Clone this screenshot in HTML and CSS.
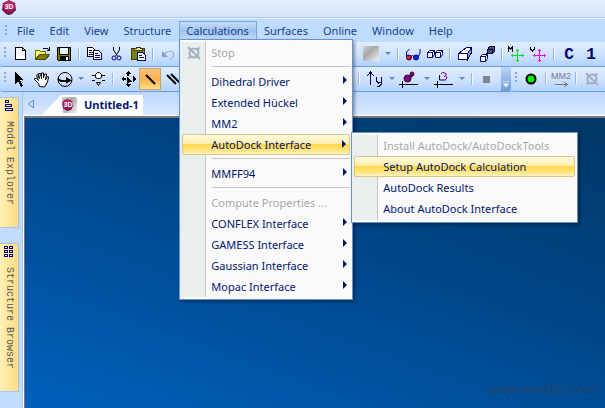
FILE: index.html
```html
<!DOCTYPE html>
<html lang="en">
<head>
<meta charset="utf-8">
<title>Untitled-1</title>
<link rel="stylesheet" href="styles.css">
</head>
<body>
<svg class="defs" width="0" height="0" aria-hidden="true">
  <defs>
    <linearGradient id="metal" x1="0" y1="0" x2="1" y2="1">
      <stop offset="0" stop-color="#d4d4d4"/><stop offset=".4" stop-color="#a8a8a8"/><stop offset="1" stop-color="#f4f4f4"/>
    </linearGradient>
    <radialGradient id="ruby" cx=".5" cy=".35" r=".65">
      <stop offset="0" stop-color="#d8327c"/><stop offset=".6" stop-color="#a01858"/><stop offset="1" stop-color="#5c1038"/>
    </radialGradient>
    <symbol id="stop" viewBox="0 0 22 22">
      <circle cx="12" cy="11" r="4.500" fill="none" stroke="#a3aebe" stroke-width="2"/>
      <path d="M6 5l12 12M15.500 7.500l2-2M6.500 16.500l2-2" stroke="#a3aebe" stroke-width="2" fill="none"/>
    </symbol>
    <symbol id="cube" viewBox="0 0 8 8">
      <path d="M.5 2.500l2-2h5v4l-2 3h-5zM.5 2.500h5v5M5.500 2.500l2-2" fill="#fff" stroke="#000070"/>
    </symbol>
  </defs>
</svg>

<header class="titlebar">
  <svg class="logo" viewBox="0 0 16 16" aria-hidden="true"><path d="M8 0l6 3 1 7-4 4-3 1-3-1-4-4 1-7z" fill="url(#ruby)"/><text x="8" y="9">3D</text></svg>
</header>

<nav class="menubar">
  <span class="grip"></span>
  <button>File</button>
  <button>Edit</button>
  <button>View</button>
  <button>Structure</button>
  <div class="menu-root">
    <button class="open">Calculations</button>
    <div class="menu main-menu" role="menu">
      <button class="item disabled" role="menuitem" disabled><svg class="item-icon smooth" viewBox="0 0 22 22"><use href="#stop"/></svg>Stop</button>
      <hr>
      <button class="item more" role="menuitem">Dihedral Driver</button>
      <button class="item more" role="menuitem">Extended Hückel</button>
      <button class="item more" role="menuitem">MM2</button>
      <div class="submenu-root">
        <button class="item more hot" role="menuitem">AutoDock Interface</button>
        <div class="menu submenu" role="menu">
          <button class="item disabled" role="menuitem" disabled>Install AutoDock/AutoDockTools</button>
          <button class="item hot" role="menuitem">Setup AutoDock Calculation</button>
          <button class="item" role="menuitem">AutoDock Results</button>
          <button class="item" role="menuitem">About AutoDock Interface</button>
        </div>
      </div>
      <hr>
      <button class="item more" role="menuitem">MMFF94</button>
      <hr>
      <button class="item disabled" role="menuitem" disabled>Compute Properties ...</button>
      <button class="item more" role="menuitem">CONFLEX Interface</button>
      <button class="item more" role="menuitem">GAMESS Interface</button>
      <button class="item more" role="menuitem">Gaussian Interface</button>
      <button class="item more" role="menuitem">Mopac Interface</button>
    </div>
  </div>
  <button>Surfaces</button>
  <button>Online</button>
  <button>Window</button>
  <button>Help</button>
</nav>

<div class="toolbar">
  <span class="grip"></span>
  <div class="group leading">
    <button class="tool" aria-label="New"><svg viewBox="0 0 22 22"><path d="M6.500 4.500h7l3 3v9h-10zM13.500 4.500v3h3" fill="#fff" stroke="#000"/></svg></button>
    <button class="tool" aria-label="Open file"><svg viewBox="0 0 22 22"><path d="M4.500 16.500v-9h4l1 1h5v3h-5z" fill="#ffff70" stroke="#776f00"/><path d="M4.500 16.500l4-5h10l-4 5z" fill="#808000" stroke="#4a4a00"/><path d="M12 6l2-1h2l2 2M18.500 4v4M16 7.500h3" fill="none" stroke="#000"/></svg></button>
    <button class="tool" aria-label="Save"><svg viewBox="0 0 22 22"><path d="M4.500 4.500h13v13h-12l-1-1z" fill="#808000" stroke="#000"/><path d="M7 5h8v6H7z" fill="#e8f0ff"/><path d="M7 13h9v4H7z" fill="#000"/><path d="M13 14h2v3h-2z" fill="#fff"/><path d="M6.500 5v6h9V5" fill="none" stroke="#000"/></svg></button>
    <span class="sep"></span>
    <button class="tool" aria-label="Copy"><svg viewBox="0 0 22 22"><path d="M4.500 4.500h5l3 3v6h-8z" fill="#fff" stroke="#000"/><path d="M6 7.500h3M6 9.500h4M6 11.500h4" stroke="#000"/><path d="M10.500 7.500h5l3 3v6h-8z" fill="#fff" stroke="#000080"/><path d="M12 10.500h3M12 12.500h5M12 14.500h5" stroke="#000080"/></svg></button>
    <button class="tool" aria-label="Cut"><svg class="smooth" viewBox="0 0 22 22"><path d="M8.500 4v3l4 6M14.500 4v3l-4 6" fill="none" stroke="#000"/><circle cx="9" cy="15" r="2" fill="none" stroke="#000080"/><circle cx="14" cy="15" r="2" fill="none" stroke="#000080"/></svg></button>
    <button class="tool" aria-label="Paste"><svg viewBox="0 0 22 22"><path d="M4.500 5.500h13v11h-13z" fill="#808000" stroke="#3c3c00"/><path d="M7 7h8V5h-2V4H9v1H7z" fill="#ffff60" stroke="#333"/><path d="M10.500 9.500h5l3 3v5h-8z" fill="#fff" stroke="#000080"/><path d="M12 12.500h3M12 14.500h5" stroke="#000080"/></svg></button>
    <span class="sep"></span>
    <button class="tool" aria-label="Undo"><svg class="smooth" viewBox="0 0 22 22"><path d="M7 12c3-5 10-5 9.500 0 0 2-1 3-3 4" fill="none" stroke="#8a9cb8"/><path d="M5 8v6h6z" fill="#8a9cb8"/></svg></button>
  </div>
  <div class="group">
    <button class="tool" aria-label="Background"><svg viewBox="0 0 22 22"><path d="M3 3h16v15H3z" fill="url(#metal)"/></svg></button>
    <button class="drop" aria-label="Background options"></button>
    <span class="sep"></span>
    <button class="tool" aria-label="Red and blue glasses"><svg class="smooth" viewBox="0 0 22 22"><path d="M4.500 14V9l3-3M9 13.500q1.500-2 3 0M16 14l2-4V6" fill="none" stroke="#000070"/><circle cx="7" cy="14.500" r="2.500" fill="#ff1010" stroke="#000070"/><circle cx="14" cy="14.500" r="2.500" fill="#1020ff" stroke="#000070"/></svg></button>
    <button class="tool" aria-label="Stereo pairs"><svg viewBox="0 0 22 22"><use href="#cube" x="3" y="7" width="8" height="8"/><use href="#cube" x="11" y="7" width="8" height="8"/></svg></button>
    <span class="sep"></span>
    <button class="tool" aria-label="Perspective"><svg viewBox="0 0 22 22"><path d="M4.500 10.500l8-6h5v5l-4 7h-9z" fill="#fff" stroke="#000070"/><path d="M13.500 10.500l4-6v5l-4 7z" fill="#a0a0a8" stroke="#000070"/><path d="M4.500 10.500h9" stroke="#000070"/></svg></button>
    <button class="tool" aria-label="Depth fading"><svg viewBox="0 0 22 22"><use href="#cube" x="4" y="11" width="8" height="8"/><path d="M11.500 6.500l2-3h5v5l-2 2h-5z" fill="#555560" stroke="#000050"/><path d="M12 6.500h4v4M10 11.500l2-2" stroke="#000050" fill="none"/></svg></button>
    <span class="sep"></span>
    <button class="tool" aria-label="Model axes"><svg viewBox="0 0 22 22"><path d="M2.500 9V4l2 2 2-2v5" fill="none" stroke="#000"/><path d="M11.500 6v13M5 12.500h13M10 7.500h3M10 17.500h3M6.500 11v3M16.500 11v3" stroke="#00e020" fill="none"/></svg></button>
    <button class="tool" aria-label="View axes"><svg viewBox="0 0 22 22"><path d="M2.500 4v2l2 2 2-2V4" fill="none" stroke="#000"/><path d="M11.500 6v13M5 12.500h13M10 7.500h3M10 17.500h3M6.500 11v3M16.500 11v3" stroke="#f0e" fill="none"/></svg></button>
    <span class="sep"></span>
    <button class="tool letter">C</button>
    <button class="tool letter">1</button>
  </div>
</div>

<div class="toolbar-row">
  <div class="toolbar">
    <span class="grip"></span>
    <div class="group leading">
      <button class="tool" aria-label="Select"><svg viewBox="0 0 22 22"><path d="M6 4v12l3-3 3 6 2-1-3-6h4z" fill="#000"/></svg></button>
      <button class="tool" aria-label="Pan"><svg class="smooth" viewBox="0 0 22 22"><path d="M8.500 18.500l-1-3-4-4v-1h2l2 2-2-5 1-1 2 4-1-5h2l1 5V5h2v5l1-4h2l-1 6 2-4 1 1-1 5-3 5z" fill="#fff" stroke="#000"/></svg></button>
      <button class="tool" aria-label="Rotate"><svg class="smooth" viewBox="0 0 22 22"><circle cx="12" cy="11.500" r="7" fill="none" stroke="#000"/><path d="M5 11l3 2h6" fill="none" stroke="#000" stroke-width="2"/><path d="M13 9l6 3.500-6 3z" fill="#000"/></svg></button>
      <button class="drop" aria-label="Rotate options"></button>
      <button class="tool" aria-label="Zoom"><svg class="smooth" viewBox="0 0 22 22"><path d="M5 7.500h3M15 7.500h3M8.500 6.500l2-2h2l2 2v3l-2 1h-2l-2-1zM5 12.500h3M15 12.500h3M9.500 14.500h4l-2 3z" fill="#fff" stroke="#000"/></svg></button>
      <span class="sep"></span>
      <button class="tool" aria-label="Move objects"><svg viewBox="0 0 22 22"><path d="M4 11l3-3v6zM7 10h2v2H7zM11 3l3 3h-2v2h-2V6H8zM19 11l-3-3v6zM11 19l-3-3h6zM10 8v8l2-2h3z" fill="#000"/></svg></button>
      <button class="tool selected" aria-label="Single bond"><svg class="smooth" viewBox="0 0 22 22"><path d="M7 7l9 9" stroke="#000" stroke-width="2"/></svg></button>
      <button class="tool" aria-label="Double bond"><svg class="smooth" viewBox="0 0 22 22"><path d="M6 7l9 9M10 6l9 9" stroke="#000" stroke-width="2"/></svg></button>
    </div>
    <div class="group">
      <span class="sep"></span>
      <button class="tool wide" aria-label="Rotate about Y"><svg viewBox="0 0 22 22"><path d="M7.500 17V5M4 8l3.500-4L11 8M13.500 9v4l2 2 2-1M18.500 9v7l-2 2h-3" fill="none" stroke="#000070"/></svg></button>
      <button class="drop" aria-label="Axis options"></button>
      <button class="tool wide" aria-label="Rotate dihedral"><svg class="smooth" viewBox="0 0 22 22"><path d="M1 16.500h19M4.500 13v7" stroke="#000"/><path d="M10 11l5-5" stroke="#301030" stroke-width="3"/><circle cx="9.500" cy="10.500" r="3.500" fill="#800080" stroke="#301030"/><circle cx="14" cy="6" r="2" fill="#800080" stroke="#301030"/></svg></button>
      <button class="drop" aria-label="Dihedral options"></button>
      <button class="tool wide" aria-label="Set angle"><svg class="smooth" viewBox="0 0 22 22"><path d="M1 16.500h19M4.500 13v7" stroke="#000"/><path d="M6.500 7v5h6" fill="none" stroke="#000070"/><path d="M8 5.500l2-1 3 1v2l-2 1M13 8l1 2-2 2" fill="none" stroke="#900070"/></svg></button>
      <button class="drop" aria-label="Angle options"></button>
      <span class="sep"></span>
      <button class="tool" aria-label="Halt"><svg viewBox="0 0 22 22"><path d="M7 8h7v7H7z" fill="#7d8490"/></svg></button>
    </div>
    <button class="overflow" aria-label="More buttons"></button>
  </div>
  <div class="toolbar calc">
    <span class="grip"></span>
    <button class="tool" aria-label="Run"><svg class="smooth" viewBox="0 0 22 22"><circle cx="11" cy="11" r="4.500" fill="#00f000" stroke="#000" stroke-width="2"/></svg></button>
    <span class="sep"></span>
    <button class="tool mm" aria-label="MM2 minimize"><span>MM2</span><svg viewBox="0 0 14 5"><path d="M1 2.500h12M10 0l3 2.500L10 5" stroke="#747b8e" fill="none"/></svg></button>
    <span class="sep"></span>
    <button class="tool" aria-label="Stop"><svg class="smooth" viewBox="0 0 22 22"><use href="#stop"/></svg></button>
  </div>
</div>

<main class="workspace">
  <aside class="rail">
    <button class="side-tab"><svg viewBox="0 0 10 12"><path d="M1.500.500h3v2h-3zM1.500 4.500h6v2h-6zM1.500 8.500h7v2h-7z"/></svg>Model Explorer</button>
    <button class="side-tab browser"><svg viewBox="0 0 10 12"><path d="M.5.500h3v2h-3zM.5 4.500h3v2h-3zM.5 8.500h3v2h-3zM5.500.500h3v2h-3zM5.500 4.500h3v2h-3zM5.500 8.500h3v2h-3z"/></svg>Structure Browser</button>
  </aside>
  <section class="document">
    <div class="tabs">
      <button class="scroll" aria-label="Previous tab"><svg viewBox="0 0 6 10"><path d="M5.500 1v8l-5-4z" fill="none" stroke="#5a8fc8"/></svg></button>
      <button class="doc-tab"><svg viewBox="0 0 16 16"><path d="M1 0h14l1 2v14H2z" fill="url(#metal)"/><path d="M7 2l4 2 1 5-2 4-4 1-4-3-1-5 2-3z" fill="url(#ruby)"/><text x="7" y="10">3D</text></svg>Untitled-1</button>
    </div>
    <div class="canvas"><span class="watermark">www.wmzhe.com</span></div>
  </section>
</main>
</body>
</html>
```
FILE: styles.css
```css
* { box-sizing: border-box; }

body {
  margin: 0;
  height: 100vh;
  display: flex;
  flex-direction: column;
  overflow: hidden;
  background: #bfdbff;
  font: 11px/16px "Noto Sans", "Segoe UI", sans-serif;
  color: #15428b;
}

button {
  margin: 0;
  padding: 0;
  border: 0;
  background: none;
  font: inherit;
  color: inherit;
}

.defs { position: absolute; }

svg { display: block; shape-rendering: crispEdges; }

.smooth, .defs, .defs symbol { shape-rendering: auto; }

svg text {
  font: bold 7px "Liberation Sans", sans-serif;
  fill: #fff;
  text-anchor: middle;
}

.titlebar {
  flex: none;
  height: 19px;
  background: linear-gradient(#e5edf8, #d0e3fb);
  border-bottom: 1px solid #e4f0ff;
  box-shadow: inset 0 -1px #a9caf5;
}

.logo { width: 16px; height: 16px; margin-left: 1px; shape-rendering: auto; }

.menubar {
  flex: none;
  display: flex;
  height: 23px;
  padding: 2px 0 2px 2px;
  position: relative;
  z-index: 2;
}

.menubar > button, .menu-root > button { height: 19px; padding: 0 8px 0 7px; }

.grip {
  flex: none;
  width: 8px;
  height: 12px;
  margin-top: 4px;
  background: repeating-linear-gradient(#7fa9e0 0 2px, transparent 2px 4px) 3px 0 / 2px 12px no-repeat;
}

.menu-root, .submenu-root { position: relative; }

.menu-root > .open {
  border: 1px solid #7ba3dc;
  border-bottom: 0;
  padding: 0 7px 0 6px;
  background: linear-gradient(#c6dcf8, #9fc2ee 50%, #c3dbf8);
}

.menu {
  position: absolute;
  border: 1px solid #6593cf;
  padding: 2px;
  background: linear-gradient(#e9eeee, #e9eeee) 0 2px / 26px calc(100% - 4px) no-repeat, #fafafa;
  box-shadow: 2px 2px 3px rgba(0, 0, 0, .35);
}

.menu::before {
  content: "";
  position: absolute;
  left: 25px;
  top: 2px;
  bottom: 2px;
  width: 1px;
  background: #c5c5c5;
}

.main-menu { top: 18px; left: 0; width: 174px; }

.submenu { top: -2px; left: 169px; width: 227px; padding-bottom: 3px; z-index: 2; }

.item {
  position: relative;
  display: block;
  width: 100%;
  height: 21px;
  padding-left: 29px;
  text-align: left;
  white-space: nowrap;
  color: #00156e;
}

.disabled { color: #a7a7a7; }

.item-icon { position: absolute; left: 0; top: 0; width: 22px; height: 22px; }

.hot {
  border: 1px solid #dcc583;
  border-radius: 2px;
  padding-left: 28px;
  background: linear-gradient(#fffbe0, #ffedab 45%, #ffd848 50%, #ffe78f 85%, #fff5c0);
}

.more::after {
  content: "";
  position: absolute;
  right: 3px;
  top: 5px;
  border: 4px solid transparent;
  border-left-color: #00156e;
  border-right: 0;
}

.menu hr {
  height: 1px;
  margin: 3px 0 4px 30px;
  border: 0;
  background: #c5c5c5;
}

.toolbar {
  flex: none;
  display: flex;
  height: 25px;
  padding-left: 1px;
  background: linear-gradient(#e0edff, #cfe2ff 50%, #b2d2ff);
  border-bottom: 1px solid #6f9dd9;
  border-radius: 3px 0 0 3px;
}

.toolbar-row { flex: none; display: flex; }

.toolbar .grip { margin-top: 5px; }

.group { display: flex; align-items: flex-start; padding-top: 1px; }

.leading { flex: none; width: 351px; }

.tool { flex: none; width: 22px; height: 22px; }

.tool > svg { width: 22px; height: 22px; }

.wide { width: 23px; }

.letter { font: bold 16px/24px "Liberation Mono", monospace; color: #000070; }

.toolbar-row .leading { width: 346px; }

.selected {
  border: 1px solid #c2a36c;
  background: linear-gradient(#fbc27d, #ffb050 50%, #ffdd8a);
}

.selected > svg { margin: -1px; }

.sep {
  flex: none;
  width: 8px;
  height: 12px;
  margin-top: 5px;
  background: linear-gradient(90deg, #90b5e8 50%, #f4f9ff 50%) 3px 0 / 2px 12px no-repeat;
}

.drop {
  flex: none;
  width: 12px;
  height: 22px;
  background: linear-gradient(#6089bf, #6089bf);
  clip-path: polygon(3px 9px, 9px 9px, 6px 12px);
}

.overflow {
  width: 10px;
  height: 24px;
  margin-left: 3px;
  border-radius: 0 3px 3px 0;
  background: linear-gradient(#bad3f5, #6f9cd9);
}

.overflow::after {
  content: "";
  display: block;
  margin: 10px 2px 0;
  height: 7px;
  background: #fff;
  clip-path: polygon(0 0, 100% 0, 100% 1px, 0 1px, 0 3px, 100% 3px, 50% 100%, 0 3px);
}

.calc { flex: auto; }

.calc .tool { margin-top: 1px; }

.calc .mm { font: 9px/8px "Liberation Sans", sans-serif; color: #747b8e; }

.mm > svg { width: 14px; height: 5px; margin: 2px auto 0; }

.workspace { flex: auto; display: flex; min-height: 0; }

.rail { flex: none; width: 22px; padding-top: 5px; }

.side-tab {
  display: flex;
  align-items: center;
  gap: 9px;
  width: 19px;
  height: 131px;
  padding-top: 2px;
  writing-mode: vertical-rl;
  border: 1px solid #aac4e8;
  border-left: 0;
  background: linear-gradient(90deg, #fff0b8, #ffdc80);
  font: 10px/14px "Liberation Mono", monospace;
  color: #555;
}

.side-tab svg { width: 10px; height: 12px; fill: none; stroke: #000080; }

.browser { height: 149px; margin-top: 15px; }

.document {
  flex: auto;
  display: flex;
  flex-direction: column;
  border-left: 1px solid #a5c5ee;
}

.tabs {
  flex: none;
  display: flex;
  height: 24px;
  background: linear-gradient(#bcd7fd, #dceaff);
}

.scroll { width: 18px; padding: 7px 5px; }

.scroll svg { width: 6px; height: 10px; shape-rendering: auto; }

.doc-tab {
  display: flex;
  align-items: center;
  gap: 7px;
  height: 21px;
  margin-top: 3px;
  padding: 0 4px 2px 20px;
  background: #fff;
  clip-path: polygon(20px 0, 100% 0, 100% 100%, 0 100%);
  font-weight: bold;
  color: #00156e;
}

.doc-tab svg { width: 16px; height: 16px; shape-rendering: auto; }

.canvas {
  flex: auto;
  display: flex;
  align-items: flex-end;
  justify-content: flex-end;
  padding: 0 9px 9px;
  border: 1px solid #777;
  border-width: 2px 0 0 1px;
  margin-left: 1px;
  background: linear-gradient(200deg, #003766, #00498e 50%, #0060bc);
  box-shadow: 0 -1px #fff, -1px 0 #fff;
}

.watermark { font: 14px/20px "Liberation Sans", sans-serif; color: #20456e; }
```
